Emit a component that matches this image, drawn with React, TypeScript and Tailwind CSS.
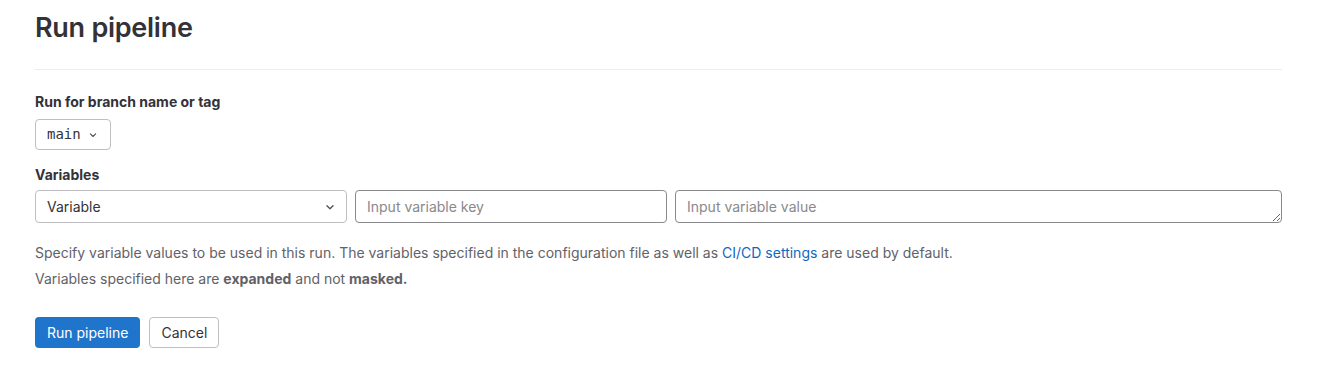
import React from 'react';

const ChevronDown = ({ className = '' }: { className?: string }) => (
  <svg viewBox="0 0 16 16" className={className} fill="none" stroke="currentColor" strokeWidth="1.5" strokeLinecap="round" strokeLinejoin="round">
    <path d="M4.5 6.5 8 10l3.5-3.5" />
  </svg>
);

export default function App() {
  return (
    <div className="min-h-screen bg-white pl-[35px] pr-[45px] text-[#333238] font-['Inter','Noto_Sans',sans-serif]">
      {/* Title */}
      <div className="pt-[9px] pb-[22px] border-b border-[#ececef]">
        <h1 className="text-[27px] leading-[38px] font-semibold tracking-[-0.01em]">Run pipeline</h1>
      </div>

      <form className="pt-[22px]">
        {/* Branch */}
        <label className="block text-sm font-bold leading-5 mb-[7px]">Run for branch name or tag</label>
        <button
          type="button"
          className="flex items-center gap-[6px] h-[31px] px-[11px] border border-[#bfbfc3] rounded-[4px] text-[14px] font-['DejaVu_Sans_Mono',monospace] text-[#333238]"
        >
          main
          <ChevronDown className="w-[12px] h-[12px] text-[#535158]" />
        </button>

        {/* Variables */}
        <label className="block text-sm font-bold leading-5 mt-[15px] mb-[5px]">Variables</label>
        <div className="flex gap-[8px]">
          <button
            type="button"
            className="w-[312px] h-[33px] flex items-center justify-between pl-[11px] pr-[9px] border border-[#bfbfc3] rounded-[4px] text-[14px]"
          >
            Variable
            <ChevronDown className="w-[14px] h-[14px] text-[#535158]" />
          </button>
          <input
            placeholder="Input variable key"
            className="w-[312px] h-[33px] px-[11px] border border-[#89888d] rounded-[4px] text-[14px] placeholder:text-[#89888d] outline-none"
          />
          <textarea
            rows={1}
            placeholder="Input variable value"
            className="flex-1 h-[33px] px-[11px] py-[6px] border border-[#89888d] rounded-[4px] text-[14px] leading-[20px] placeholder:text-[#89888d] outline-none"
          />
        </div>

        {/* Help */}
        <div className="mt-[17px] text-[14px] leading-[26px] text-[#626168]">
          <p>
            Specify variable values to be used in this run. The variables specified in the configuration file as well as{' '}
            <a href="#" className="text-[#1068bf]">CI/CD settings</a> are used by default.
          </p>
          <p>
            Variables specified here are <strong className="font-bold">expanded</strong> and not{' '}
            <strong className="font-bold">masked.</strong>
          </p>
        </div>

        {/* Actions */}
        <div className="flex gap-[9px] mt-[25px]">
          <button type="button" className="h-[31px] px-[12px] rounded-[4px] bg-[#1f75cb] text-white text-[14px]">
            Run pipeline
          </button>
          <button type="button" className="h-[31px] px-[11px] rounded-[4px] border border-[#bfbfc3] bg-white text-[14px] text-[#333238]">
            Cancel
          </button>
        </div>
      </form>
    </div>
  );
}
